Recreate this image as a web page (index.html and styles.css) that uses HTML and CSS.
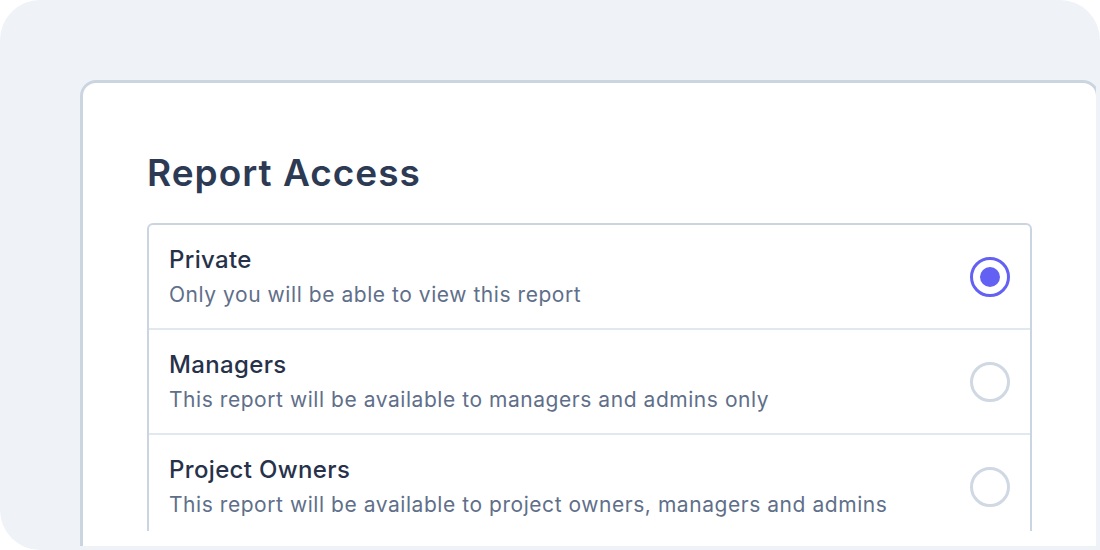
FILE: index.html
```html
<!DOCTYPE html>
<html lang="en">
<head>
<meta charset="utf-8">
<title>Report Access</title>
<link rel="stylesheet" href="styles.css">
</head>
<body>
<div class="frame">
  <div class="viewport">
    <section class="card">
      <div class="card-content">
        <h1 class="title">Report Access</h1>
        <div class="options" role="radiogroup">
          <label class="option">
            <div class="option-text">
              <div class="option-title">Private</div>
              <div class="option-desc">Only you will be able to view this report</div>
            </div>
            <span class="radio radio-checked"><span class="radio-dot"></span></span>
          </label>
          <label class="option">
            <div class="option-text">
              <div class="option-title">Managers</div>
              <div class="option-desc">This report will be available to managers and admins only</div>
            </div>
            <span class="radio"></span>
          </label>
          <label class="option">
            <div class="option-text">
              <div class="option-title">Project Owners</div>
              <div class="option-desc">This report will be available to project owners, managers and admins</div>
            </div>
            <span class="radio"></span>
          </label>
        </div>
      </div>
    </section>
  </div>
</div>
</body>
</html>
```

FILE: styles.css
```css
* { box-sizing: border-box; }

html, body {
  margin: 0;
  padding: 0;
  background: #ffffff;
}

body {
  font-family: Inter, "Noto Sans", "Liberation Sans", sans-serif;
  width: 1100px;
  height: 550px;
  overflow: hidden;
}

.frame {
  width: 1100px;
  height: 550px;
  background: #eff3f8;
  border-radius: 40px 40px 0 40px;
  padding: 80px 4px 4px 80px;
  overflow: hidden;
}

.viewport {
  width: 1016px;
  height: 466px;
  overflow: hidden;
}

.card {
  width: 1019px;
  background: #ffffff;
  border: 3px solid #cbd5e1;
  border-radius: 16px 16px 0 0;
  padding: 66px 64px 64px 64px;
}

.card-content {
  height: 382px;
  overflow: hidden;
}

.title {
  margin: 0 0 26px 0;
  font-size: 37px;
  line-height: 48px;
  font-weight: 600;
  letter-spacing: 1px;
  color: #2d3a54;
}

.options {
  border: 2px solid #cbd5e1;
  border-radius: 6px;
  overflow: hidden;
}

.option {
  display: flex;
  align-items: center;
  justify-content: space-between;
  padding: 19px 20px 19px 20px;
  border-top: 2px solid #e2e8f0;
}

.option:first-child {
  border-top: none;
}

.option-text {
  display: flex;
  flex-direction: column;
  gap: 5px;
}

.option-title {
  font-size: 24px;
  line-height: 32px;
  font-weight: 500;
  letter-spacing: 0.35px;
  color: #27324a;
}

.option-desc {
  font-size: 21px;
  line-height: 28px;
  letter-spacing: 0.55px;
  color: #5f6f8a;
}

.radio {
  flex: none;
  width: 40px;
  height: 40px;
  border-radius: 50%;
  border: 3px solid #cfd8e3;
  display: flex;
  align-items: center;
  justify-content: center;
}

.radio-checked {
  border-color: #6361f4;
}

.radio-dot {
  width: 20px;
  height: 20px;
  border-radius: 50%;
  background: #6361f4;
}
```
